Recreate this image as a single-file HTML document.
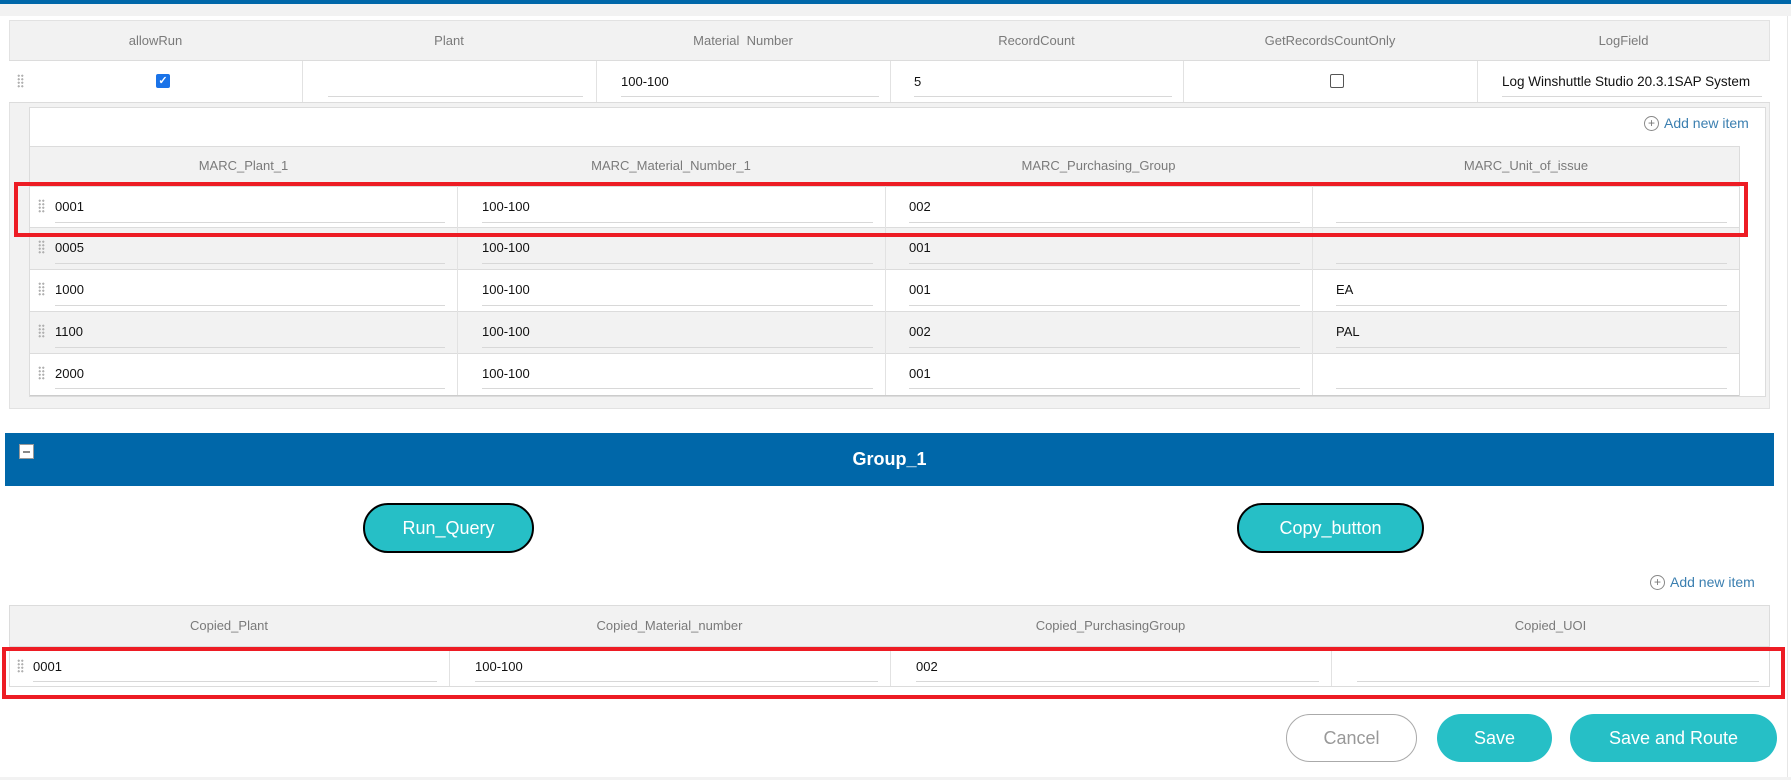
<!DOCTYPE html>
<html><head><meta charset="utf-8"><style>
*{box-sizing:border-box;margin:0;padding:0}
body{width:1791px;height:780px;position:relative;background:#fff;font-family:"Liberation Sans",sans-serif;overflow:hidden}
.a{position:absolute}
.hd{position:absolute;color:#7a7a7a;font-size:13px;text-align:center}
.tx{position:absolute;font-size:13px;color:#111}
.ul{position:absolute;height:1px;background:#d8d8d8}
.vl{position:absolute;width:1px;background:#e2e2e2}
.hl{position:absolute;height:1px;background:#dcdcdc}
.dr{position:absolute;width:7px;height:14px;background-image:radial-gradient(circle,#b0b0b0 1px,transparent 1.2px);background-size:3.5px 3.5px}
.red{position:absolute;border:4px solid #ed1c24}
.btn{position:absolute;background:#26bfc6;color:#fff;border-radius:26px;text-align:center;font-size:18px}
.add{position:absolute;color:#3b7fb0;font-size:14px;display:flex;align-items:center;height:18px}
.add i{display:inline-block;width:15px;height:15px;border:1.5px solid #888;border-radius:50%;font-style:normal;color:#777;font-size:12px;line-height:12px;text-align:center;margin-right:5px}
</style></head><body>
<div class="a" style="left:0;top:0;width:1791px;height:4px;background:#0067a9"></div>
<div class="a" style="left:0;top:4px;width:1791px;height:12px;background:#f2f2f2"></div>
<div class="a" style="left:1787px;top:16px;width:1px;height:764px;background:#e6e6e6"></div>

<div class="a" style="left:9px;top:20px;width:1761px;height:389px;background:#f2f2f2;border:1px solid #e2e2e2"></div>
<div class="hl" style="left:9px;top:60px;width:1761px"></div>
<div class="a" style="left:9px;top:61px;width:1761px;height:41px;background:#fff"></div>
<div class="hl" style="left:9px;top:102px;width:1761px"></div>
<div class="hd" style="left:9px;top:33px;width:293px">allowRun</div>
<div class="hd" style="left:302px;top:33px;width:294px">Plant</div>
<div class="hd" style="left:596px;top:33px;width:294px">Material&nbsp; Number</div>
<div class="hd" style="left:890px;top:33px;width:293px">RecordCount</div>
<div class="hd" style="left:1183px;top:33px;width:294px">GetRecordsCountOnly</div>
<div class="hd" style="left:1477px;top:33px;width:293px">LogField</div>
<div class="vl" style="left:302px;top:61px;height:41px"></div>
<div class="vl" style="left:596px;top:61px;height:41px"></div>
<div class="vl" style="left:890px;top:61px;height:41px"></div>
<div class="vl" style="left:1183px;top:61px;height:41px"></div>
<div class="vl" style="left:1477px;top:61px;height:41px"></div>
<div class="dr" style="left:17px;top:74px"></div>
<div class="a" style="left:156px;top:74px;width:14px;height:14px;background:#1a73e8;border-radius:2px;color:#fff;font-size:11px;line-height:14px;text-align:center;font-weight:bold">✓</div>
<div class="ul" style="left:328px;top:96px;width:255px"></div>
<div class="tx" style="left:621px;top:74px">100-100</div>
<div class="ul" style="left:621px;top:96px;width:258px"></div>
<div class="tx" style="left:914px;top:74px">5</div>
<div class="ul" style="left:914px;top:96px;width:258px"></div>
<div class="a" style="left:1330px;top:74px;width:14px;height:14px;border:1.5px solid #555;border-radius:2px;background:#fff"></div>
<div class="tx" style="left:1502px;top:74px;font-size:13.5px">Log Winshuttle Studio 20.3.1SAP System</div>
<div class="ul" style="left:1502px;top:96px;width:260px"></div>

<div class="a" style="left:29px;top:107px;width:1737px;height:290px;background:#fff;border:1px solid #dcdcdc"></div>
<div class="add" style="left:1644px;top:114px"><i>+</i>Add new item</div>
<div class="a" style="left:30px;top:146px;width:1710px;height:250px;background:#f2f2f2;border-top:1px solid #dcdcdc;border-right:1px solid #dcdcdc"></div>
<div class="hd" style="left:30px;top:158px;width:427px">MARC_Plant_1</div>
<div class="hd" style="left:457px;top:158px;width:428px">MARC_Material_Number_1</div>
<div class="hd" style="left:885px;top:158px;width:427px">MARC_Purchasing_Group</div>
<div class="hd" style="left:1312px;top:158px;width:428px">MARC_Unit_of_issue</div>

<div class="a" style="left:30px;top:186px;width:1709px;height:41px;background:#fff"></div>
<div class="a" style="left:30px;top:269px;width:1709px;height:42px;background:#fff"></div>
<div class="a" style="left:30px;top:353px;width:1709px;height:42px;background:#fff"></div>
<div class="hl" style="left:30px;top:186px;width:1709px"></div>
<div class="hl" style="left:30px;top:227px;width:1709px"></div>
<div class="hl" style="left:30px;top:269px;width:1709px"></div>
<div class="hl" style="left:30px;top:311px;width:1709px"></div>
<div class="hl" style="left:30px;top:353px;width:1709px"></div>
<div class="hl" style="left:30px;top:395px;width:1709px;background:#ccc"></div>
<div class="vl" style="left:457px;top:186px;height:209px"></div>
<div class="vl" style="left:885px;top:186px;height:209px"></div>
<div class="vl" style="left:1312px;top:186px;height:209px"></div>

<div class="dr" style="left:38px;top:199px"></div><div class="tx" style="left:55px;top:199px">0001</div><div class="tx" style="left:482px;top:199px">100-100</div><div class="tx" style="left:909px;top:199px">002</div>
<div class="dr" style="left:38px;top:240px"></div><div class="tx" style="left:55px;top:240px">0005</div><div class="tx" style="left:482px;top:240px">100-100</div><div class="tx" style="left:909px;top:240px">001</div>
<div class="dr" style="left:38px;top:282px"></div><div class="tx" style="left:55px;top:282px">1000</div><div class="tx" style="left:482px;top:282px">100-100</div><div class="tx" style="left:909px;top:282px">001</div><div class="tx" style="left:1336px;top:282px">EA</div>
<div class="dr" style="left:38px;top:324px"></div><div class="tx" style="left:55px;top:324px">1100</div><div class="tx" style="left:482px;top:324px">100-100</div><div class="tx" style="left:909px;top:324px">002</div><div class="tx" style="left:1336px;top:324px">PAL</div>
<div class="dr" style="left:38px;top:366px"></div><div class="tx" style="left:55px;top:366px">2000</div><div class="tx" style="left:482px;top:366px">100-100</div><div class="tx" style="left:909px;top:366px">001</div>
<div class="ul" style="left:55px;top:222px;width:390px"></div><div class="ul" style="left:482px;top:222px;width:391px"></div><div class="ul" style="left:909px;top:222px;width:391px"></div><div class="ul" style="left:1336px;top:222px;width:391px"></div>
<div class="ul" style="left:55px;top:263px;width:390px"></div><div class="ul" style="left:482px;top:263px;width:391px"></div><div class="ul" style="left:909px;top:263px;width:391px"></div><div class="ul" style="left:1336px;top:263px;width:391px"></div>
<div class="ul" style="left:55px;top:305px;width:390px"></div><div class="ul" style="left:482px;top:305px;width:391px"></div><div class="ul" style="left:909px;top:305px;width:391px"></div><div class="ul" style="left:1336px;top:305px;width:391px"></div>
<div class="ul" style="left:55px;top:347px;width:390px"></div><div class="ul" style="left:482px;top:347px;width:391px"></div><div class="ul" style="left:909px;top:347px;width:391px"></div><div class="ul" style="left:1336px;top:347px;width:391px"></div>
<div class="ul" style="left:55px;top:388px;width:390px"></div><div class="ul" style="left:482px;top:388px;width:391px"></div><div class="ul" style="left:909px;top:388px;width:391px"></div><div class="ul" style="left:1336px;top:388px;width:391px"></div>
<div class="red" style="left:14px;top:182px;width:1734px;height:55px"></div>

<div class="a" style="left:5px;top:433px;width:1769px;height:53px;background:#0067a9"></div>
<div class="a" style="left:19px;top:444px;width:15px;height:15px;background:#fff;border:1px solid #999"><div class="a" style="left:3px;top:6px;width:7px;height:1.5px;background:#888"></div></div>
<div class="a" style="left:5px;top:449px;width:1769px;text-align:center;color:#fff;font-size:18px;font-weight:600">Group_1</div>

<div class="btn" style="left:363px;top:503px;width:171px;height:50px;border:2px solid #000;line-height:46px">Run_Query</div>
<div class="btn" style="left:1237px;top:503px;width:187px;height:50px;border:2px solid #000;line-height:46px">Copy_button</div>

<div class="add" style="left:1650px;top:573px"><i>+</i>Add new item</div>

<div class="a" style="left:9px;top:605px;width:1761px;height:82px;background:#f2f2f2;border:1px solid #dcdcdc"></div>
<div class="a" style="left:10px;top:646px;width:1759px;height:40px;background:#fff;border-top:1px solid #dcdcdc"></div>
<div class="hd" style="left:9px;top:618px;width:440px">Copied_Plant</div>
<div class="hd" style="left:449px;top:618px;width:441px">Copied_Material_number</div>
<div class="hd" style="left:890px;top:618px;width:441px">Copied_PurchasingGroup</div>
<div class="hd" style="left:1331px;top:618px;width:439px">Copied_UOI</div>
<div class="vl" style="left:449px;top:647px;height:39px"></div>
<div class="vl" style="left:890px;top:647px;height:39px"></div>
<div class="vl" style="left:1331px;top:647px;height:39px"></div>
<div class="dr" style="left:17px;top:659px"></div>
<div class="tx" style="left:33px;top:659px">0001</div>
<div class="tx" style="left:475px;top:659px">100-100</div>
<div class="tx" style="left:916px;top:659px">002</div>
<div class="ul" style="left:33px;top:681px;width:404px"></div>
<div class="ul" style="left:475px;top:681px;width:403px"></div>
<div class="ul" style="left:916px;top:681px;width:403px"></div>
<div class="ul" style="left:1357px;top:681px;width:402px"></div>
<div class="red" style="left:2px;top:647px;width:1783px;height:52px"></div>

<div class="a" style="left:1286px;top:714px;width:131px;height:48px;border:1px solid #aaa;border-radius:24px;color:#999;font-size:18px;text-align:center;line-height:46px">Cancel</div>
<div class="btn" style="left:1437px;top:714px;width:115px;height:48px;line-height:48px;border-radius:24px">Save</div>
<div class="btn" style="left:1570px;top:714px;width:207px;height:48px;line-height:48px;border-radius:24px">Save and Route</div>
<div class="a" style="left:0;top:777px;width:1791px;height:3px;background:#f2f2f2"></div>
</body></html>
